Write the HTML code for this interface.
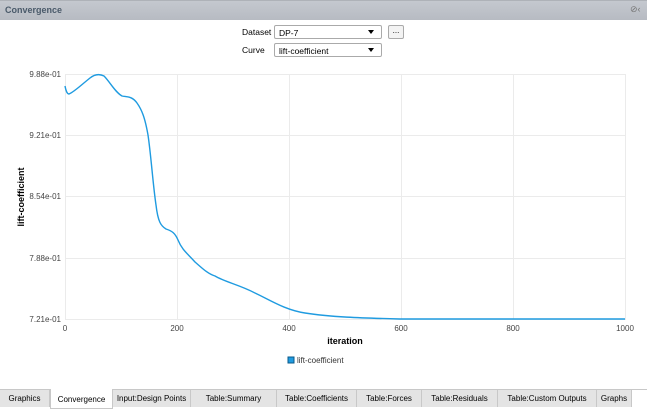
<!DOCTYPE html>
<html><head><style>
body{margin:0;width:647px;height:410px;background:#fff;font-family:"Liberation Sans",sans-serif;font-size:9px;color:#000;position:relative;overflow:hidden}
.hdr{position:absolute;left:0;top:0;width:647px;height:20px;background:linear-gradient(#c4c8cf,#b7bbc2);border-top:1px solid #aeb2b8;box-sizing:border-box}
.hdr span{position:absolute;left:5px;top:4px;font-weight:bold;color:#4a5a6a;font-size:9px}
.lbl{position:absolute;font-size:9px}
.sel{position:absolute;height:14px;border:1px solid #aaa;border-radius:2px;background:#fff;box-sizing:border-box;font-size:8.5px;padding:2px 4px}
.sel:after{content:"";position:absolute;right:7px;top:4px;border-left:3px solid transparent;border-right:3px solid transparent;border-top:4px solid #000}
.btn{position:absolute;left:388px;top:25px;width:16px;height:14px;border:1px solid #aaa;border-radius:2px;background:#f3f3f3;box-sizing:border-box;font-size:8px;text-align:center;line-height:10px}
.tabs{position:absolute;left:0;top:389px;height:18px;width:647px;border-top:1px solid #c8c8c8}
.tab{position:absolute;top:0;height:17px;background:#e4e4e4;border-right:1px solid #c8c8c8;box-sizing:border-box;text-align:center;line-height:17px;font-size:8px;white-space:nowrap;overflow:hidden}
.tab.a{background:#fff;top:-1px;height:20px;border:1px solid #c8c8c8;border-top:none;line-height:21px}
</style></head><body>
<div class="hdr"><span>Convergence</span><span style="left:630px;top:3px;font-weight:normal;color:#777">⊘‹</span></div>
<div class="lbl" style="left:242px;top:27px;font-size:8.5px">Dataset</div>
<div class="sel" style="left:274px;top:25px;width:108px">DP-7</div>
<div class="btn">...</div>
<div class="lbl" style="left:242px;top:45px;font-size:8.5px">Curve</div>
<div class="sel" style="left:274px;top:43px;width:108px">lift-coefficient</div>
<svg style="position:absolute;left:0;top:0" width="647" height="388" font-family="Liberation Sans, sans-serif" font-size="8">
<g stroke="#ebebeb" stroke-width="1">
<line x1="65" y1="74.5" x2="625" y2="74.5"/><line x1="65" y1="135.5" x2="625" y2="135.5"/><line x1="65" y1="196.5" x2="625" y2="196.5"/><line x1="65" y1="258.5" x2="625" y2="258.5"/><line x1="65" y1="319.5" x2="625" y2="319.5"/>
<line x1="65.5" y1="74" x2="65.5" y2="320"/><line x1="177.5" y1="74" x2="177.5" y2="320"/><line x1="289.5" y1="74" x2="289.5" y2="320"/><line x1="401.5" y1="74" x2="401.5" y2="320"/><line x1="513.5" y1="74" x2="513.5" y2="320"/><line x1="625.5" y1="74" x2="625.5" y2="320"/>
</g>
<g fill="#444" text-anchor="end">
<text x="61" y="77">9.88e-01</text><text x="61" y="138">9.21e-01</text><text x="61" y="199">8.54e-01</text><text x="61" y="261">7.88e-01</text><text x="61" y="322">7.21e-01</text>
</g>
<g fill="#444" text-anchor="middle">
<text x="65" y="331">0</text><text x="177" y="331">200</text><text x="289" y="331">400</text><text x="401" y="331">600</text><text x="513" y="331">800</text><text x="625" y="331">1000</text>
</g>
<text x="345" y="344" text-anchor="middle" font-weight="bold" font-size="9">iteration</text>
<text transform="translate(24,197) rotate(-90)" text-anchor="middle" font-weight="bold" font-size="9">lift-coefficient</text>
<path fill="none" stroke="#1f9be0" stroke-width="1.4" d="M65,86 C66,91 67,94 69,94 C74,92 80,86 90,78 C95,74 100,74 104,76 C110,82 115,92 122,96 C127,97 132,96 137,103 C142,110 145,118 148,135 C151,155 153,185 156,205 C158,222 161,226 166,229 C172,231 175,233 178,240 C182,250 188,254 195,262 C202,268 208,274 215,276 C225,282 240,285 255,293 C270,300 285,310 305,313 C330,317 360,318 400,319 L625,319"/>
<rect x="288" y="357" width="6" height="6" fill="#1f9be0" stroke="#0a5a8a" stroke-width="1"/>
<text x="297" y="363" fill="#333">lift-coefficient</text>
</svg>
<div class="tabs">
<div class="tab" style="left:0;width:50px">Graphics</div>
<div class="tab a" style="left:50px;width:63px">Convergence</div>
<div class="tab" style="left:113px;width:78px">Input:Design Points</div>
<div class="tab" style="left:191px;width:86px">Table:Summary</div>
<div class="tab" style="left:277px;width:80px">Table:Coefficients</div>
<div class="tab" style="left:357px;width:65px">Table:Forces</div>
<div class="tab" style="left:422px;width:76px">Table:Residuals</div>
<div class="tab" style="left:498px;width:99px">Table:Custom Outputs</div>
<div class="tab" style="left:597px;width:35px">Graphs</div>
</div>
</body></html>
